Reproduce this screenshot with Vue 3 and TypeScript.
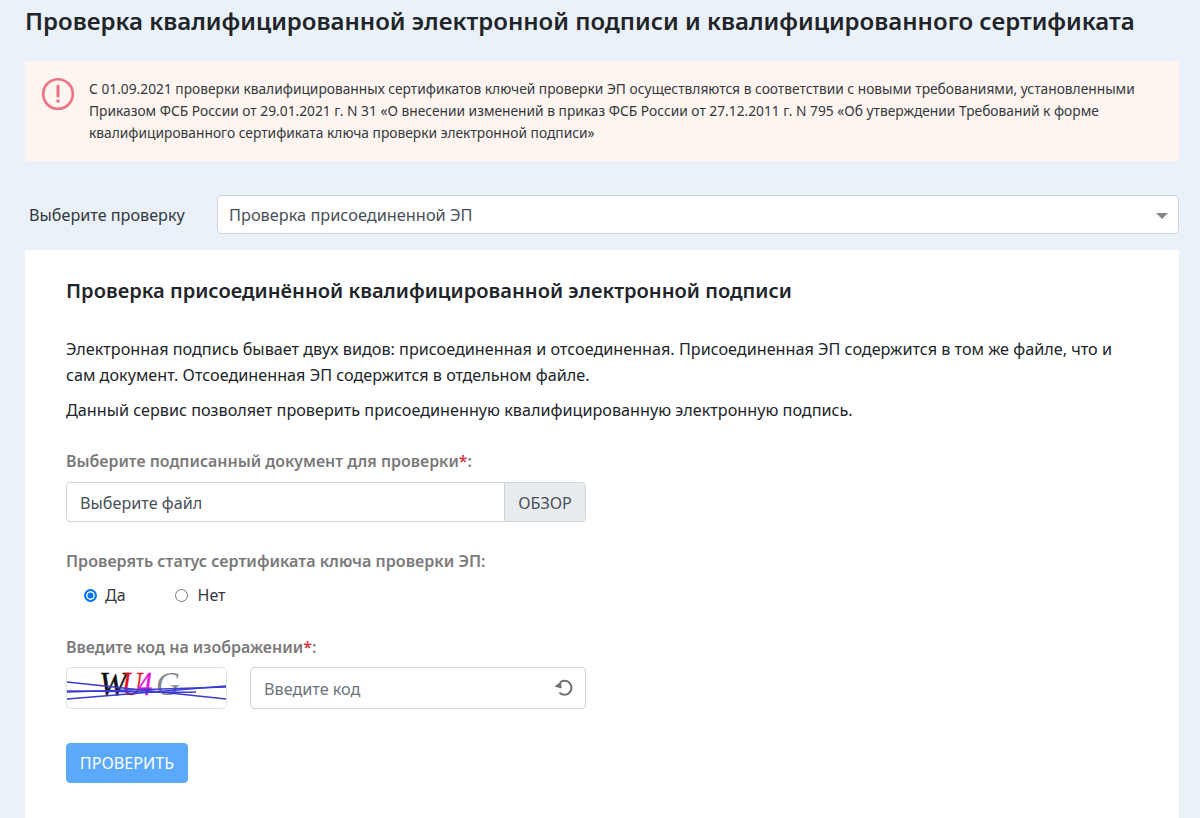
<script setup lang="ts">
const alertLines: string[] = [
  'С 01.09.2021 проверки квалифицированных сертификатов ключей проверки ЭП осуществляются в соответствии с новыми требованиями, установленными',
  'Приказом ФСБ России от 29.01.2021 г. N 31 «О внесении изменений в приказ ФСБ России от 27.12.2011 г. N 795 «Об утверждении Требований к форме',
  'квалифицированного сертификата ключа проверки электронной подписи»',
]
</script>

<template>
  <div class="page">
    <h1 class="title">Проверка квалифицированной электронной подписи и квалифицированного сертификата</h1>

    <div class="alert">
      <svg class="alert-icon" width="34" height="34" viewBox="0 0 34 34">
        <circle cx="17" cy="17" r="14.8" fill="none" stroke="#ee7285" stroke-width="2.6" />
        <path d="M17 9v10" stroke="#ee7285" stroke-width="3" stroke-linecap="round" />
        <circle cx="17" cy="24" r="1.8" fill="#ee7285" />
      </svg>
      <div class="alert-text">
        <div v-for="line in alertLines" :key="line" class="alert-line">{{ line }}</div>
      </div>
    </div>

    <div class="select-row">
      <div class="select-label">Выберите проверку</div>
      <div class="select">
        <span>Проверка присоединенной ЭП</span>
        <i class="caret"></i>
      </div>
    </div>

    <div class="card">
      <h2 class="card-title">Проверка присоединённой квалифицированной электронной подписи</h2>
      <p class="para">Электронная подпись бывает двух видов: присоединенная и отсоединенная. Присоединенная ЭП содержится в том же файле, что и<br />сам документ. Отсоединенная ЭП содержится в отдельном файле.</p>
      <p class="para second">Данный сервис позволяет проверить присоединенную квалифицированную электронную подпись.</p>

      <div class="label doc-label">Выберите подписанный документ для проверки<span class="req">*</span>:</div>
      <div class="file">
        <span class="file-text">Выберите файл</span>
        <span class="file-btn">ОБЗОР</span>
      </div>

      <div class="label status-label">Проверять статус сертификата ключа проверки ЭП:</div>
      <div class="radios">
        <label class="radio"><span class="dot on"></span>Да</label>
        <label class="radio"><span class="dot"></span>Нет</label>
      </div>

      <div class="label code-label">Введите код на изображении<span class="req">*</span>:</div>
      <div class="captcha-row">
        <svg class="captcha" width="161" height="42" viewBox="0 0 161 42">
          <rect x="0.5" y="0.5" width="160" height="41" rx="4" fill="#fff" stroke="#dde2e8" />
          <g font-family="'Liberation Serif', serif" font-size="33" font-style="italic">
            <text x="33" y="28" fill="#111" stroke="#111" stroke-width="0.4">W</text>
            <text x="56" y="28" fill="#e3111f" stroke="#e3111f" stroke-width="0.3" textLength="20" lengthAdjust="spacingAndGlyphs">U</text>
            <text x="72" y="28" fill="#e010d8" stroke="#e010d8" stroke-width="0.5" textLength="14" lengthAdjust="spacingAndGlyphs">4</text>
            <text x="90" y="28" fill="#888">G</text>
          </g>
          <g fill="none" stroke="#3a3acf" stroke-width="1.3">
            <path d="M1 15 L160 32" />
            <path d="M1 25 L160 20" />
            <path d="M1 32 L160 19" />
            <path d="M1 24 C60 24 100 26 130 25" />
          </g>
        </svg>
        <div class="code-input">
          <span class="code-placeholder">Введите код</span>
          <svg width="20" height="20" viewBox="0 0 20 20" fill="none">
            <path d="M6 4.4a7 7 0 1 1-.6 10.2" stroke="#6b6f73" stroke-width="2" />
            <path d="M0.6 8.6L7 3.4l.6 7z" fill="#6b6f73" />
          </svg>
        </div>
      </div>

      <button class="submit" type="button">ПРОВЕРИТЬ</button>
    </div>
  </div>
</template>

<style>
html, body { margin: 0; background: #eaf1f8; }
</style>

<style scoped>
.page {
  height: 818px;
  overflow: hidden;
  box-sizing: border-box;
  padding: 0 21px 0 25px;
  background: #eaf1f8;
  font-family: "Noto Sans", "Open Sans", sans-serif;
  color: #212529;
}
.title {
  margin: 0;
  padding-top: 4px;
  font-size: 24px;
  line-height: 34px;
  font-weight: 600;
  color: #212529;
  white-space: nowrap;
}
.alert {
  display: flex;
  margin-top: 23px;
  height: 100px;
  box-sizing: border-box;
  background: #fef5f0;
  padding: 16px 0 0 16px;
}
.alert-icon { flex: none; margin-right: 14px; }
.alert-text { font-size: 13.78px; line-height: 22px; margin-top: 1px; color: #33383d; }
.alert-line { white-space: nowrap; }
.select-row {
  display: flex;
  align-items: center;
  margin-top: 34px;
}
.select-label { width: 192px; padding-left: 4px; font-size: 16.2px; color: #33383d; box-sizing: border-box; }
.select {
  flex: 1;
  height: 39px;
  box-sizing: border-box;
  background: #fff;
  border: 1px solid #ced4da;
  border-radius: 5px;
  display: flex;
  align-items: center;
  justify-content: space-between;
  padding: 0 10px 0 11px;
  font-size: 16.33px;
  color: #495057;
}
.caret {
  width: 0;
  height: 0;
  border-left: 6px solid transparent;
  border-right: 6px solid transparent;
  border-top: 6px solid #888;
  margin-top: 2px;
}
.card {
  margin-top: 16px;
  background: #fff;
  height: 600px;
  padding: 28px 41px 0;
  box-sizing: border-box;
}
.card-title {
  margin: 0;
  font-size: 20.1px;
  line-height: 26px;
  font-weight: 600;
  color: #212529;
}
.para { margin: 0; font-size: 16.2px; line-height: 26px; color: #212529; }
.card-title + .para { margin-top: 32px; }
.second { margin-top: 9px; }
.label { font-size: 16px; line-height: 22px; font-weight: 600; color: #7a7a7a; }
.req { color: #dc3545; }
.doc-label { margin-top: 27px; font-size: 15.95px; }
.file {
  width: 520px;
  height: 40px;
  margin-top: 10px;
  box-sizing: border-box;
  display: flex;
  border: 1px solid #ced4da;
  border-radius: 4px;
  overflow: hidden;
  font-size: 16.2px;
  color: #495057;
}
.file-text { flex: 1; padding-left: 13px; line-height: 40px; }
.file-btn { width: 81px; text-align: center; line-height: 40px; background: #e9ecef; border-left: 1px solid #ced4da; box-sizing: border-box; }
.status-label { margin-top: 28px; font-size: 16.1px; }
.radios { display: flex; margin-top: 11px; padding-left: 18px; font-size: 16px; }
.radio { display: flex; align-items: center; line-height: 24px; color: #33383d; }
.radio + .radio { margin-left: 49px; }
.radio + .radio .dot { margin-right: 10px; }
.dot {
  width: 13px;
  height: 13px;
  box-sizing: border-box;
  border-radius: 50%;
  border: 1px solid #767676;
  background: #fff;
  margin-right: 8px;
}
.dot.on { border: 2px solid #0075ff; box-shadow: inset 0 0 0 1.5px #fff; background: #0075ff; }
.code-label { margin-top: 29px; }
.captcha-row { display: flex; margin-top: 9px; align-items: flex-start; }
.captcha { flex: none; display: block; }
.code-input {
  width: 336px;
  height: 42px;
  margin-left: 23px;
  box-sizing: border-box;
  border: 1px solid #ced4da;
  border-radius: 4px;
  display: flex;
  align-items: center;
  justify-content: space-between;
  padding: 0 11px 0 13px;
  font-size: 16.2px;
  color: #6c757d;
}
.code-placeholder { padding-top: 2px; }
.submit {
  display: block;
  margin-top: 34px;
  width: 122px;
  height: 40px;
  background: #5aa9fb;
  border: 1px solid #5aa9fb;
  border-radius: 4px;
  color: #fff;
  font-family: inherit;
  font-size: 16.2px;
  padding: 0;
}
</style>
